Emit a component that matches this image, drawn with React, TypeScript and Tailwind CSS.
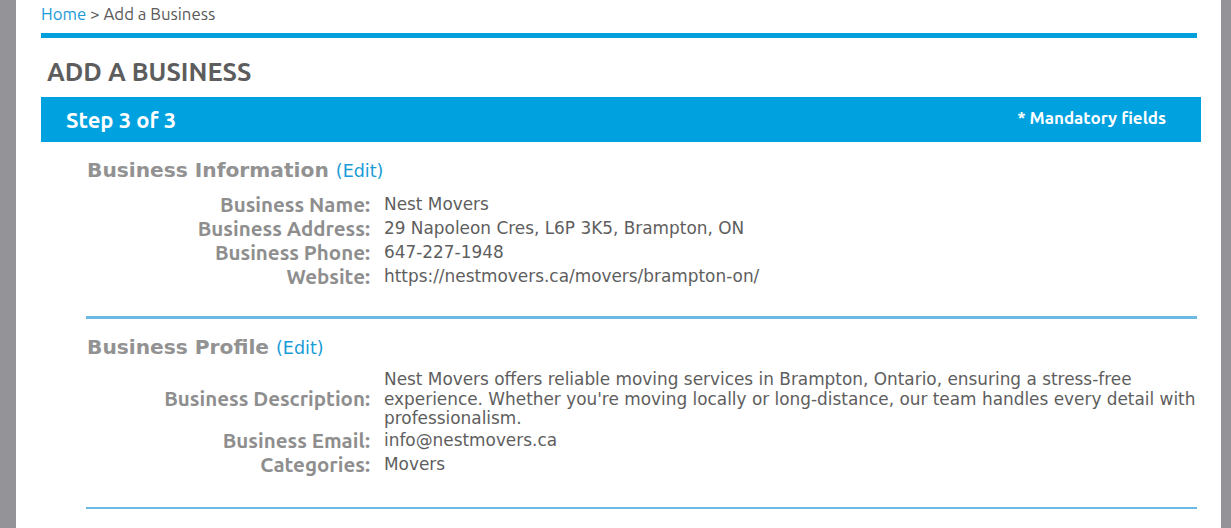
const ubuntu = "font-['Ubuntu','Open_Sans','Noto_Sans',sans-serif]"
const verdana = "font-['DejaVu_Sans','Verdana',sans-serif]"

type Row = { label: string; value: string }

const info: Row[] = [
  { label: "Business Name:", value: "Nest Movers" },
  { label: "Business Address:", value: "29 Napoleon Cres, L6P 3K5, Brampton, ON" },
  { label: "Business Phone:", value: "647-227-1948" },
  { label: "Website:", value: "https://nestmovers.ca/movers/brampton-on/" },
]

const profile: Row[] = [
  {
    label: "Business Description:",
    value:
      "Nest Movers offers reliable moving services in Brampton, Ontario, ensuring a stress-free experience. Whether you're moving locally or long-distance, our team handles every detail with professionalism.",
  },
  { label: "Business Email:", value: "info@nestmovers.ca" },
  { label: "Categories:", value: "Movers" },
]

function Section({ title, rows }: { title: string; rows: Row[] }) {
  return (
    <section className="pl-[46px] pr-[4px]">
      <h2 className={`${verdana} text-[20.2px] font-bold text-[#929292] leading-[26px]`}>
        {title}{" "}
        <a href="#" className="text-[17.5px] font-normal text-[#1a9bd7]">
          (Edit)
        </a>
      </h2>
      <dl className="mt-[9px] grid grid-cols-[283px_1fr] gap-x-[14px]">
        {rows.map((r) => (
          <div key={r.label} className="contents">
            <dt
              className={`${ubuntu} flex items-center justify-end text-right text-[20.5px] font-bold text-[#8e8e8e] leading-[24px]`}
            >
              {r.label}
            </dt>
            <dd className={`${verdana} flex items-center text-[16.9px] text-[#5e5e5e] leading-[19.5px]`}>
              {r.value}
            </dd>
          </div>
        ))}
      </dl>
    </section>
  )
}

export default function App() {
  return (
    <div className="min-h-[528px] bg-[#939398] pl-[16px] pr-[10px]">
      <div className="min-h-[528px] bg-white pl-[25px] pr-[20px]">
        <nav className={`${ubuntu} pt-[3px] text-[16.8px] leading-[22px] text-[#5a5a5a]`}>
          <a href="#" className="text-[#1a9bd7]">
            Home
          </a>{" "}
          &gt; Add a Business
        </nav>
        <div className="mt-[8px] mr-[4px] h-[5px] bg-[#00a0dc]" />
        <h1 className={`${ubuntu} mt-[20px] pl-[6px] text-[25.4px] font-bold leading-[28px] text-[#5d5d5d]`}>
          ADD A BUSINESS
        </h1>
        <div className="mt-[11px] flex h-[45px] items-center justify-between bg-[#00a1df] pl-[25px] pr-[35px] text-white">
          <span className={`${ubuntu} text-[22px] font-bold`}>Step 3 of 3</span>
          <span className={`${ubuntu} mb-[4px] text-[17px] font-bold`}>* Mandatory fields</span>
        </div>
        <div className="pt-[15px]">
          <Section title="Business Information" rows={info} />
          <div className="ml-[45px] mr-[4px] mt-[27px] h-[3px] bg-[#6cb9e6]" />
          <div className="pt-[15px]">
            <Section title="Business Profile" rows={profile} />
          </div>
          <div className="ml-[45px] mr-[4px] mt-[30px] h-[2px] bg-[#6cb9e6]" />
        </div>
      </div>
    </div>
  )
}
